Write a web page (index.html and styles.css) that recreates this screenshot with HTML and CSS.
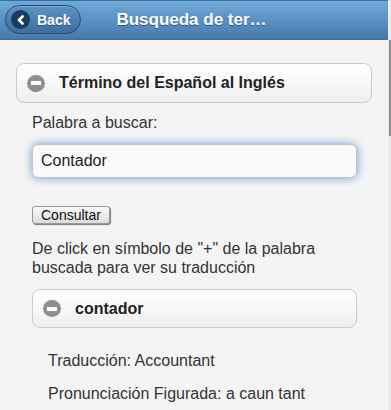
FILE: index.html
```html
<!DOCTYPE html>
<html lang="es">
<head>
  <meta charset="UTF-8">
  <meta name="viewport" content="width=device-width, initial-scale=1.0">
  <title>Busqueda de terminos</title>
  <link rel="stylesheet" href="styles.css">
</head>
<body>
  <div class="page">
    <div class="main">
      <div class="header">
        <a class="back-btn" href="#">
          <span class="back-icon">
            <svg width="10" height="10" viewBox="0 0 10 10"><path d="M6.5 1.5 L3 5 L6.5 8.5" fill="none" stroke="#fff" stroke-width="2.6" stroke-linecap="round" stroke-linejoin="round"/></svg>
          </span>
          <span class="back-text">Back</span>
        </a>
        <h1 class="title">Busqueda de terminos</h1>
      </div>

      <div class="content">
        <div class="collapsible">
          <div class="collapsible-head">
            <span class="minus-icon"><span class="minus-bar"></span></span>
            <span>Término del Español al Inglés</span>
          </div>
          <div class="collapsible-body">
            <label class="field-label" for="word">Palabra a buscar:</label>
            <div class="input-wrap">
              <input type="text" id="word" value="Contador">
            </div>
            <button class="consult-btn">Consultar</button>
            <p class="hint">De click en símbolo de "+" de la palabra buscada para ver su traducción</p>

            <div class="collapsible inner">
              <div class="collapsible-head">
                <span class="minus-icon"><span class="minus-bar"></span></span>
                <span>contador</span>
              </div>
              <div class="result-body">
                <p class="result-line">Traducción: Accountant</p>
                <p class="result-line">Pronunciación Figurada: a caun tant</p>
              </div>
            </div>
          </div>
        </div>
      </div>
    </div>
    <div class="scrollbar"><div class="scroll-thumb"></div></div>
  </div>
</body>
</html>
```

FILE: styles.css
```css
html, body {
  margin: 0;
  padding: 0;
  height: 100%;
  overflow: hidden;
}
body {
  font-family: 'Liberation Sans', Arial, sans-serif;
  background-color: #f4f4f4;
  color: #333333;
}
.page {
  display: flex;
  height: 410px;
}
.main {
  flex: 1;
  min-width: 0;
}
.scrollbar {
  width: 3px;
  background-color: #ececec;
}
.scroll-thumb {
  margin-top: 40px;
  height: 96px;
  width: 2px;
  margin-left: 1px;
  background-color: #8c8c8c;
}
.header {
  position: relative;
  height: 40px;
  box-sizing: border-box;
  border-top: 1px solid #3d6d9c;
  border-bottom: 1px solid #456f9a;
  background-image: linear-gradient(#6eabd8, #4778ad);
  display: flex;
  align-items: center;
}
.back-btn {
  position: absolute;
  left: 5px;
  top: 4px;
  height: 29px;
  width: 76px;
  box-sizing: border-box;
  border: 1px solid #1f4a74;
  border-radius: 15px;
  background-image: linear-gradient(#5b93c6, #3e6d9e);
  box-shadow: inset 0 1px 0 rgba(255,255,255,0.25);
  display: flex;
  align-items: center;
  text-decoration: none;
}
.back-icon {
  width: 19px;
  height: 19px;
  margin-left: 5px;
  border-radius: 50%;
  background-color: #1c3b5e;
  display: flex;
  align-items: center;
  justify-content: center;
}
.back-text {
  margin-left: 7px;
  color: #ffffff;
  font-weight: bold;
  font-size: 14px;
  text-shadow: 0 1px 0 #2a5580;
}
.title {
  margin: 0 30%;
  width: 40%;
  font-size: 17px;
  font-weight: bold;
  color: #ffffff;
  text-align: center;
  white-space: nowrap;
  overflow: hidden;
  text-overflow: ellipsis;
  text-shadow: 0 1px 0 #2a5580;
}
.content {
  padding: 23px 16px 0 16px;
}
.collapsible-head {
  height: 40px;
  box-sizing: border-box;
  border: 1px solid #cccccc;
  border-radius: 8px;
  background-image: linear-gradient(#ffffff, #efefef);
  display: flex;
  align-items: center;
  font-weight: bold;
  font-size: 16px;
  color: #222222;
}
.minus-icon {
  width: 18px;
  height: 17px;
  margin-left: 10px;
  margin-right: 14px;
  border-radius: 50%;
  background-color: #8e8e8e;
  display: flex;
  align-items: center;
  justify-content: center;
}
.minus-bar {
  width: 10px;
  height: 4px;
  background-color: #ffffff;
}
.collapsible-body {
  padding: 10px 15px 0 16px;
}
.field-label {
  display: block;
  font-size: 16px;
  line-height: 20px;
}
.input-wrap {
  margin-top: 11px;
}
.input-wrap input {
  width: 100%;
  height: 34px;
  box-sizing: border-box;
  border: 1px solid #b8c6d6;
  border-radius: 6px;
  padding: 0 8px;
  font-family: 'Liberation Sans', Arial, sans-serif;
  font-size: 16px;
  color: #222222;
  background-color: #fafafa;
  box-shadow: 0 0 10px #6e9ed2;
  outline: none;
}
.consult-btn {
  display: block;
  margin-top: 28px;
  height: 18px;
  padding: 0 8px;
  font-family: 'Liberation Sans', Arial, sans-serif;
  font-size: 14px;
  color: #111111;
  border: 1px solid #9a9a9a;
  border-radius: 3px;
  background-image: linear-gradient(#fafafa, #dcdcdc);
  box-shadow: 1px 1px 1px #777777;
  line-height: 16px;
}
.hint {
  margin: 15px 0 0 0;
  font-size: 16px;
  line-height: 19px;
}
.inner {
  margin-top: 12px;
}
.inner .collapsible-head {
  height: 39px;
}
.result-body {
  padding: 23px 16px 0 16px;
}
.result-line {
  margin: 0 0 14px 0;
  font-size: 16px;
  line-height: 19px;
}
```
